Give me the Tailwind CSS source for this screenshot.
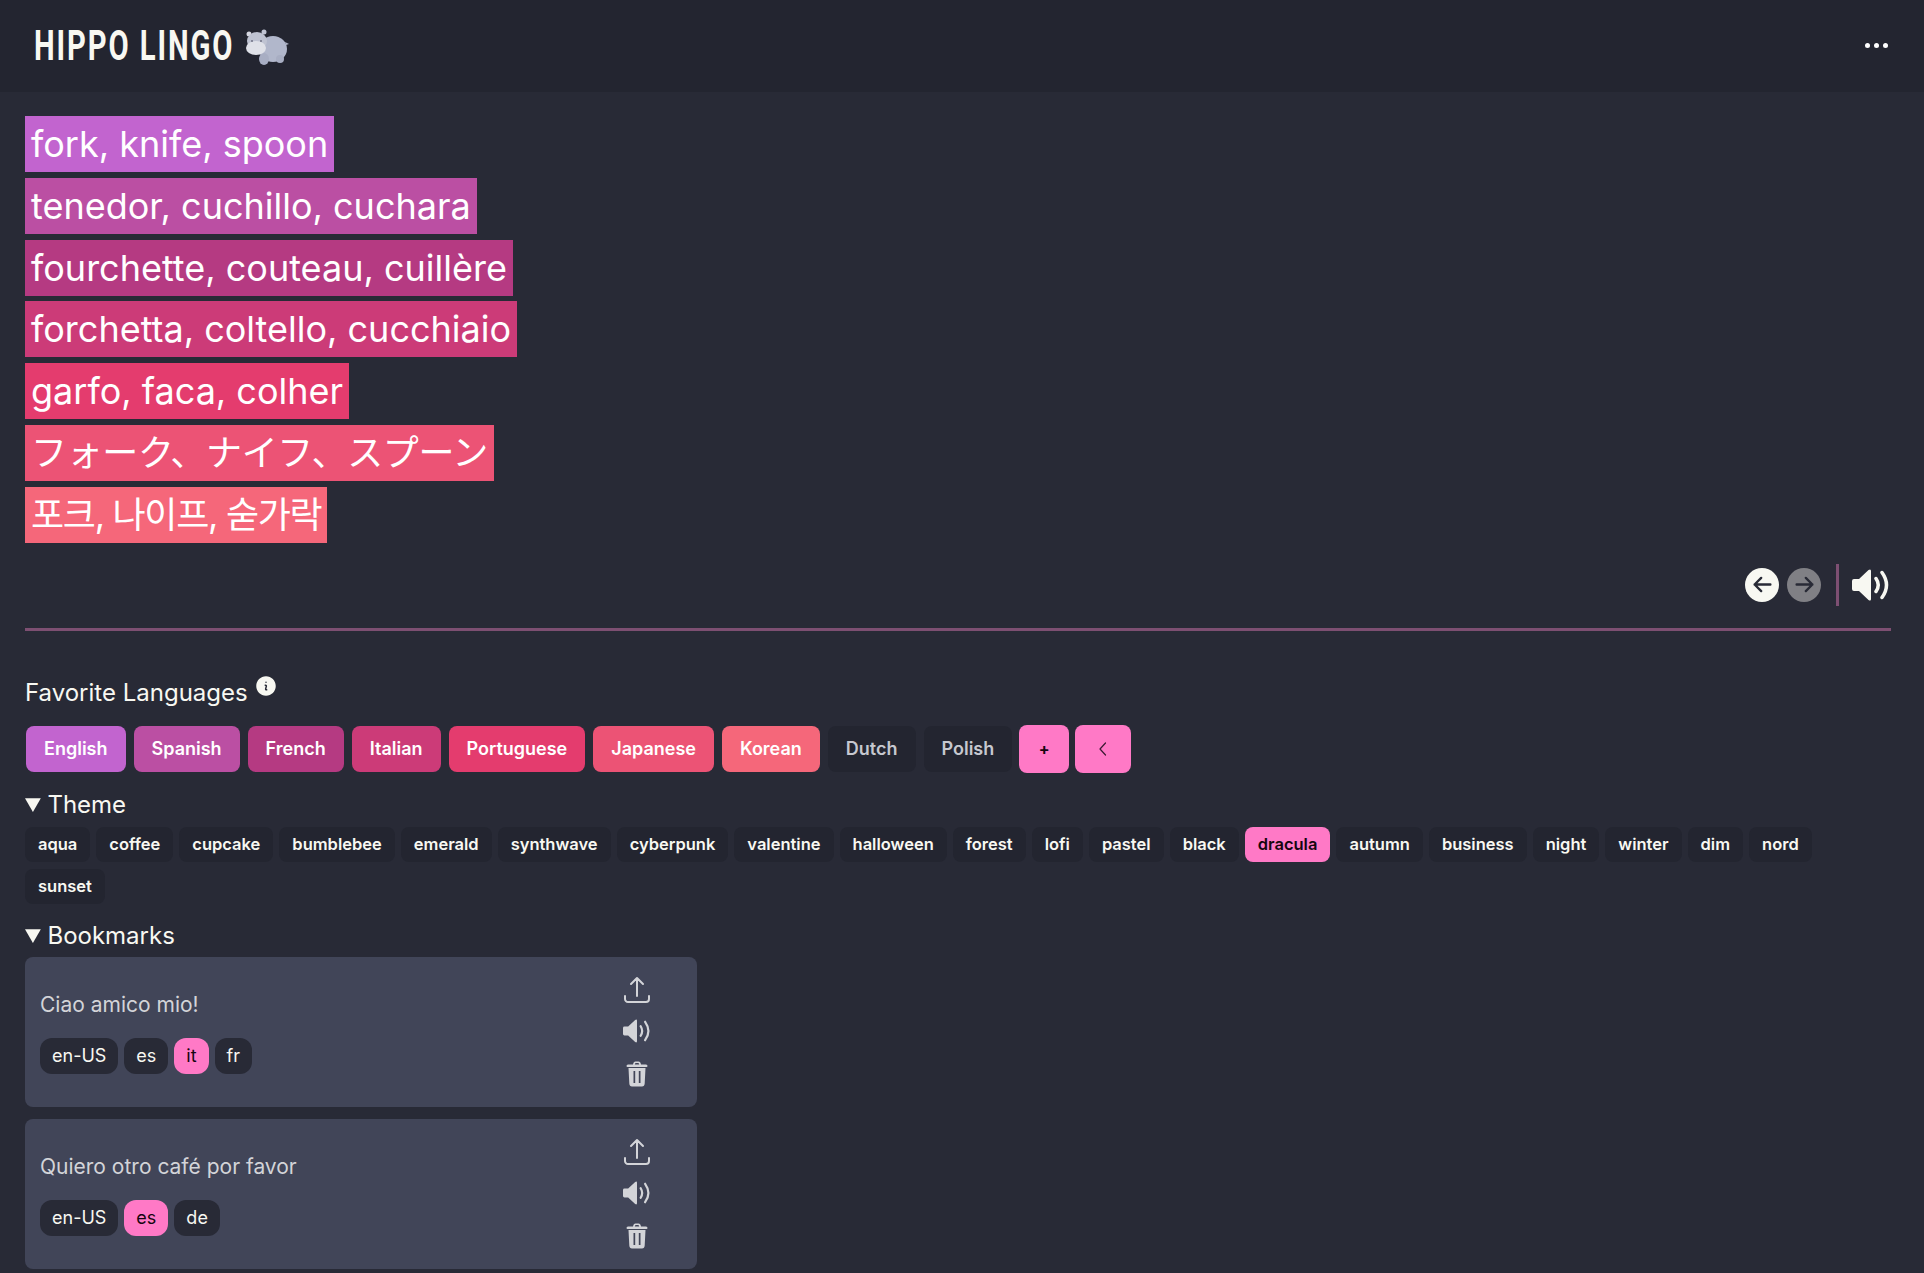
<!doctype html>
<html lang="en">
<head>
    <meta charset="UTF-8">
    <title>Hippo Lingo</title>
    <script src="https://cdn.jsdelivr.net/npm/@tailwindcss/browser@4"></script>
</head>
<body class="h-screen overflow-hidden bg-[#282a36] text-[#f8f8f2] font-['Inter','Noto_Sans_CJK_JP',sans-serif]">
<header class="h-[92px] flex items-center justify-between pl-[34px] pr-[36px] pb-[2px] bg-[#232530]">
    <div class="flex items-center">
        <div class="w-[197px] h-[44px] font-['Roboto'] font-bold text-[43px] leading-[44px] tracking-[2.8px] whitespace-nowrap origin-left scale-x-[0.68]">HIPPO LINGO</div>
        <svg class="mt-[-7px]" width="70" height="60" viewBox="0 0 70 60">
            <path d="M54 30l4 2-3 1z" fill="#aeb3c6"/>
            <ellipse cx="42" cy="37" rx="14" ry="13" fill="#b1b7cb"/>
            <ellipse cx="33" cy="47" rx="5" ry="6" fill="#a8aec3"/>
            <ellipse cx="49" cy="47" rx="4" ry="4" fill="#a8aec3"/>
            <circle cx="18" cy="22" r="2.5" fill="#d5d7e0"/>
            <circle cx="33" cy="20" r="2.5" fill="#c0c4d3"/>
            <ellipse cx="26" cy="29" rx="10" ry="9" fill="#bfc3d2"/>
            <ellipse cx="25" cy="36" rx="10" ry="7" fill="#dfe1e8"/>
            <circle cx="21" cy="29" r="1" fill="#6f7285"/>
            <circle cx="30" cy="29" r="1" fill="#6f7285"/>
        </svg>
    </div>
    <div class="flex gap-[4px]">
        <span class="size-[5px] rounded-full bg-white"></span>
        <span class="size-[5px] rounded-full bg-white"></span>
        <span class="size-[5px] rounded-full bg-white"></span>
    </div>
</header>
<main class="pl-[25px] pr-[33px] pt-[24px]">
    <div class="flex flex-col items-start gap-[5.83px] text-[36px] leading-[56px] text-white">
        <div class="h-14 px-[6px] bg-[#c264cf]">fork, knife, spoon</div>
        <div class="h-14 px-[6px] bg-[#bb4fa3]">tenedor, cuchillo, cuchara</div>
        <div class="h-14 px-[6px] bg-[#b53a82]">fourchette, couteau, cuillère</div>
        <div class="h-14 px-[6px] bg-[#cc3b78]">forchetta, coltello, cucchiaio</div>
        <div class="h-14 px-[6px] bg-[#e43c6e]">garfo, faca, colher</div>
        <div class="h-14 px-[6px] bg-[#ec5375] tracking-[-0.35px]" lang="ja">フォーク、ナイフ、スプーン</div>
        <div class="h-14 px-[6px] bg-[#f5677a] tracking-[-1.3px] font-['Inter','Noto_Sans_CJK_KR',sans-serif]" lang="ko">포크, 나이프, 숟가락</div>
    </div>

    <div class="mt-[21px] h-[42px] flex items-center justify-end">
        <button class="size-[34px] rounded-full bg-[#f8f8f2] flex items-center justify-center">
            <svg class="size-[21px]" viewBox="0 0 24 24" fill="none" stroke="#282a36" stroke-width="2.7" stroke-linecap="round" stroke-linejoin="round"><path d="M10.5 19.5 3 12m0 0 7.5-7.5M3 12h18"/></svg>
        </button>
        <button class="ml-2 size-[34px] rounded-full bg-[#808085] flex items-center justify-center">
            <svg class="size-[21px]" viewBox="0 0 24 24" fill="none" stroke="#282a36" stroke-width="2.7" stroke-linecap="round" stroke-linejoin="round"><path d="M13.5 4.5 21 12m0 0-7.5 7.5M21 12H3"/></svg>
        </button>
        <div class="ml-[15px] w-[3px] h-[42px] bg-[#7d4f72]"></div>
        <svg class="ml-[13px] mr-[1px]" width="38" height="32" viewBox="0 0 38 32" fill="none">
            <path d="M0 12Q0 10 2 10H7L16.500 1Q19 -.5 19 2V30Q19 32.500 16.500 31L7 22H2Q0 22 0 20Z" fill="#f8f8f2"/>
            <path d="M24 9.500Q28.500 16 24 22.500M30 3.500Q39 16 30 28.500" stroke="#f8f8f2" stroke-width="3.500" stroke-linecap="round"/>
        </svg>
    </div>

    <div class="mt-[22px] h-[3px] bg-[#7d4f72]"></div>

    <div class="mt-[46.5px] flex items-start">
        <h2 class="text-[24px] leading-[32px]">Favorite Languages</h2>
        <svg class="ml-[6px] mt-[-3px] size-6" viewBox="0 0 24 24" fill="#f8f8f2"><path fill-rule="evenodd" d="M2.25 12c0-5.385 4.365-9.75 9.75-9.75s9.750 4.365 9.750 9.750-4.365 9.750-9.750 9.750S2.250 17.385 2.250 12Zm8.706-1.442c1.146-.573 2.437.463 2.126 1.706l-.709 2.836.042-.02a.75.75 0 0 1 .67 1.34l-.04.022c-1.147.573-2.438-.463-2.127-1.706l.71-2.836-.042.02a.75.75 0 1 1-.671-1.34l.041-.022ZM12 9a.75.75 0 1 0 0-1.500.75.75 0 0 0 0 1.500Z" clip-rule="evenodd"/></svg>
    </div>

    <div class="mt-[15.5px] pl-px flex items-center gap-2 text-[18px] font-semibold">
        <button class="h-[46px] px-[18px] rounded-lg bg-[#c264cf] text-white">English</button>
        <button class="h-[46px] px-[18px] rounded-lg bg-[#bb4fa3] text-white">Spanish</button>
        <button class="h-[46px] px-[18px] rounded-lg bg-[#b53a82] text-white">French</button>
        <button class="h-[46px] px-[18px] rounded-lg bg-[#cc3b78] text-white">Italian</button>
        <button class="h-[46px] px-[18px] rounded-lg bg-[#e43c6e] text-white">Portuguese</button>
        <button class="h-[46px] px-[18px] rounded-lg bg-[#ec5375] text-white">Japanese</button>
        <button class="h-[46px] px-[18px] rounded-lg bg-[#f5677a] text-white">Korean</button>
        <button class="h-[46px] px-[18px] rounded-lg bg-[#232530] text-[#c6c8cf]">Dutch</button>
        <button class="h-[46px] px-[18px] rounded-lg bg-[#232530] text-[#c6c8cf]">Polish</button>
        <div class="-ml-px flex gap-[6px]">
            <button class="w-[50px] h-[48px] rounded-lg bg-[#ff79c6] text-[#16060f] text-[16px] font-bold">+</button>
            <button class="w-[56px] h-[48px] rounded-lg bg-[#ff79c6] flex items-center justify-center">
                <svg class="size-4" viewBox="0 0 16 16" fill="none" stroke="#3a1a32" stroke-width="1.200" stroke-linecap="round" stroke-linejoin="round"><path d="M10.500 2 5 8l5.500 6"/></svg>
            </button>
        </div>
    </div>

    <details open class="mt-[16.5px]">
        <summary class="text-[24px] leading-[32px]"><span class="-ml-[3px]">Theme</span></summary>
        <div class="mt-[6px] flex flex-wrap gap-x-[6px] gap-y-[7px] text-[16.5px] leading-[35px] font-semibold">
            <span class="h-[35px] px-[13px] rounded-lg bg-[#232530]">aqua</span>
            <span class="h-[35px] px-[13px] rounded-lg bg-[#232530]">coffee</span>
            <span class="h-[35px] px-[13px] rounded-lg bg-[#232530]">cupcake</span>
            <span class="h-[35px] px-[13px] rounded-lg bg-[#232530]">bumblebee</span>
            <span class="h-[35px] px-[13px] rounded-lg bg-[#232530]">emerald</span>
            <span class="h-[35px] px-[13px] rounded-lg bg-[#232530]">synthwave</span>
            <span class="h-[35px] px-[13px] rounded-lg bg-[#232530]">cyberpunk</span>
            <span class="h-[35px] px-[13px] rounded-lg bg-[#232530]">valentine</span>
            <span class="h-[35px] px-[13px] rounded-lg bg-[#232530]">halloween</span>
            <span class="h-[35px] px-[13px] rounded-lg bg-[#232530]">forest</span>
            <span class="h-[35px] px-[13px] rounded-lg bg-[#232530]">lofi</span>
            <span class="h-[35px] px-[13px] rounded-lg bg-[#232530]">pastel</span>
            <span class="h-[35px] px-[13px] rounded-lg bg-[#232530]">black</span>
            <span class="h-[35px] px-[13px] rounded-lg bg-[#ff79c6] text-[#16060f]">dracula</span>
            <span class="h-[35px] px-[13px] rounded-lg bg-[#232530]">autumn</span>
            <span class="h-[35px] px-[13px] rounded-lg bg-[#232530]">business</span>
            <span class="h-[35px] px-[13px] rounded-lg bg-[#232530]">night</span>
            <span class="h-[35px] px-[13px] rounded-lg bg-[#232530]">winter</span>
            <span class="h-[35px] px-[13px] rounded-lg bg-[#232530]">dim</span>
            <span class="h-[35px] px-[13px] rounded-lg bg-[#232530]">nord</span>
            <span class="h-[35px] px-[13px] rounded-lg bg-[#232530]">sunset</span>
        </div>
    </details>

    <details open class="mt-[15.5px]">
        <summary class="text-[24px] leading-[32px]"><span class="-ml-[3px]">Bookmarks</span></summary>
        <div class="mt-[5.5px] w-[672px] flex flex-col gap-3">
            <div class="h-[150px] rounded-lg bg-[#414558] flex items-center justify-between pl-[15px] pr-[44px]">
                <div>
                    <p class="text-[21px] leading-7 text-[#d3d4d8]">Ciao amico mio!</p>
                    <div class="mt-[19px] flex gap-[6px] text-[18px] leading-[36px]">
                        <span class="h-9 px-3 rounded-xl bg-[#282a36]">en-US</span>
                        <span class="h-9 px-3 rounded-xl bg-[#282a36]">es</span>
                        <span class="h-9 px-3 rounded-xl bg-[#ff79c6] text-[#16060f]">it</span>
                        <span class="h-9 px-3 rounded-xl bg-[#282a36]">fr</span>
                    </div>
                </div>
                <div class="flex flex-col items-center gap-[17.5px] text-[#d3d4d8]">
                    <svg class="size-8 -my-1" viewBox="0 0 24 24" fill="none" stroke="currentColor" stroke-width="1.500" stroke-linecap="round" stroke-linejoin="round"><path d="M3 16.500v2.250A2.250 2.250 0 0 0 5.250 21h13.500A2.250 2.250 0 0 0 21 18.750V16.500m-13.500-9L12 3m0 0 4.500 4.500M12 3v13.500"/></svg>
                    <svg width="28" height="24" viewBox="0 0 38 32" fill="none">
                        <path d="M0 12Q0 10 2 10H7L16.500 1Q19 -.5 19 2V30Q19 32.500 16.500 31L7 22H2Q0 22 0 20Z" fill="currentColor"/>
                        <path d="M24 9.500Q28 16 24 22.500M30 3.500Q39 16 30 28.500" stroke="currentColor" stroke-width="3" stroke-linecap="round"/>
                    </svg>
                    <svg width="22" height="26" viewBox="0 0 22 26" fill="currentColor">
                        <path d="M7 3.500Q7.500 .5 9.500 .5H12.500Q14.500 .5 15 3.500H20Q21.500 3.500 21.500 5Q21.500 6 20.500 6H1.500Q.5 6 .5 5Q.5 3.500 2 3.500ZM8.800 3.500H13.200Q13 2 12.300 2H9.700Q9 2 8.800 3.500Z" fill-rule="evenodd"/>
                        <path fill-rule="evenodd" d="M2.500 7H19.500L18.700 22.500Q18.500 25.500 16 25.500H6Q3.500 25.500 3.300 22.500ZM7.500 10V22H9.200V10ZM12.800 10V22H14.500V10Z"/>
                    </svg>
                </div>
            </div>
            <div class="h-[150px] rounded-lg bg-[#414558] flex items-center justify-between pl-[15px] pr-[44px]">
                <div>
                    <p class="text-[21px] leading-7 text-[#d3d4d8]">Quiero otro café por favor</p>
                    <div class="mt-[19px] flex gap-[6px] text-[18px] leading-[36px]">
                        <span class="h-9 px-3 rounded-xl bg-[#282a36]">en-US</span>
                        <span class="h-9 px-3 rounded-xl bg-[#ff79c6] text-[#16060f]">es</span>
                        <span class="h-9 px-3 rounded-xl bg-[#282a36]">de</span>
                    </div>
                </div>
                <div class="flex flex-col items-center gap-[17.5px] text-[#d3d4d8]">
                    <svg class="size-8 -my-1" viewBox="0 0 24 24" fill="none" stroke="currentColor" stroke-width="1.500" stroke-linecap="round" stroke-linejoin="round"><path d="M3 16.500v2.250A2.250 2.250 0 0 0 5.250 21h13.500A2.250 2.250 0 0 0 21 18.750V16.500m-13.500-9L12 3m0 0 4.500 4.500M12 3v13.500"/></svg>
                    <svg width="28" height="24" viewBox="0 0 38 32" fill="none">
                        <path d="M0 12Q0 10 2 10H7L16.500 1Q19 -.5 19 2V30Q19 32.500 16.500 31L7 22H2Q0 22 0 20Z" fill="currentColor"/>
                        <path d="M24 9.500Q28 16 24 22.500M30 3.500Q39 16 30 28.500" stroke="currentColor" stroke-width="3" stroke-linecap="round"/>
                    </svg>
                    <svg width="22" height="26" viewBox="0 0 22 26" fill="currentColor">
                        <path d="M7 3.500Q7.500 .5 9.500 .5H12.500Q14.500 .5 15 3.500H20Q21.500 3.500 21.500 5Q21.500 6 20.500 6H1.500Q.5 6 .5 5Q.5 3.500 2 3.500ZM8.800 3.500H13.200Q13 2 12.300 2H9.700Q9 2 8.800 3.500Z" fill-rule="evenodd"/>
                        <path fill-rule="evenodd" d="M2.500 7H19.500L18.700 22.500Q18.500 25.500 16 25.500H6Q3.500 25.500 3.300 22.500ZM7.500 10V22H9.200V10ZM12.800 10V22H14.500V10Z"/>
                    </svg>
                </div>
            </div>
        </div>
    </details>
</main>
</body>
</html>
